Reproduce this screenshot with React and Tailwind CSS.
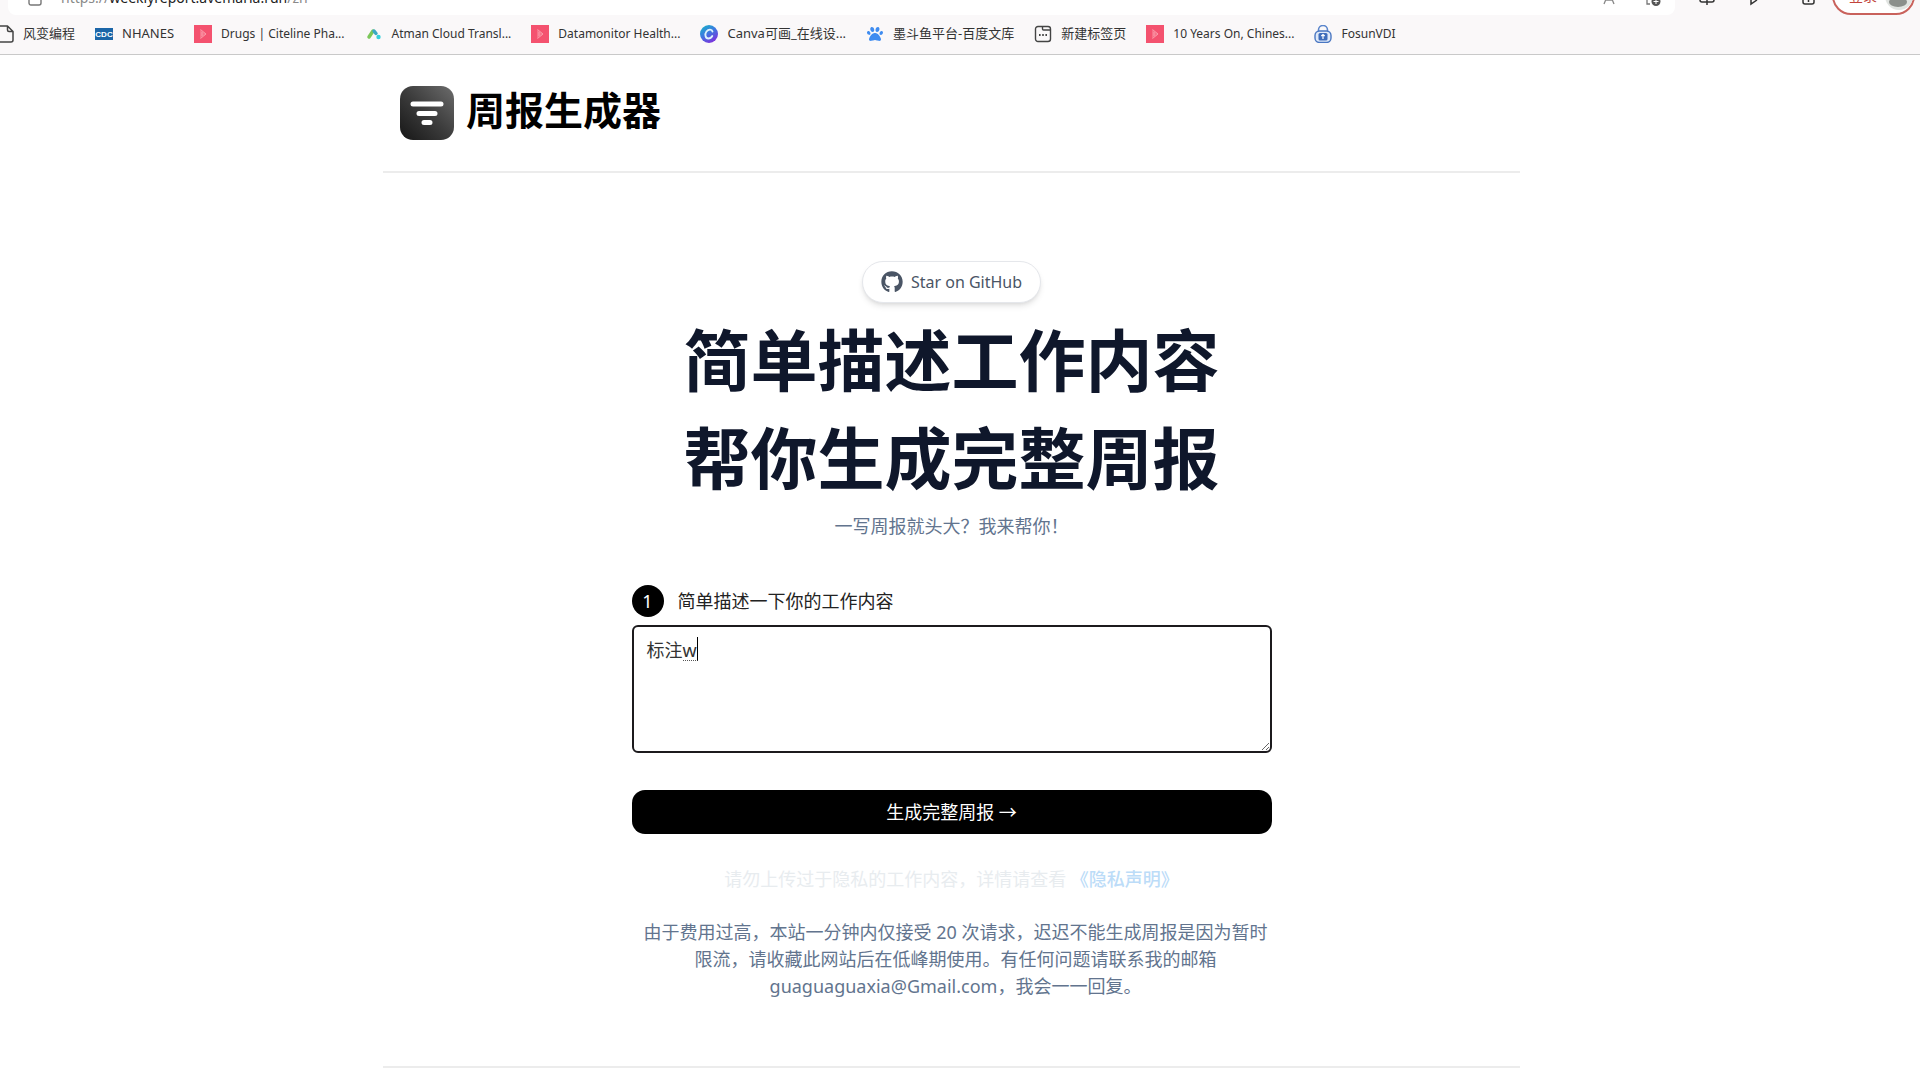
import { useState } from "react";
import { FaGithub } from "react-icons/fa";
import { FaPaw } from "react-icons/fa6";

const PageIcon = () => (
  <svg className="h-[18px] w-[14px]" viewBox="0 0 14 18" fill="none" stroke="#444" strokeWidth="1.5" strokeLinejoin="round">
    <path d="M-1 1h8.5L13 6.500v8.500a2 2 0 0 1-2 2H-1M7.500 1v4a1.500 1.500 0 0 0 1.500 1.500h4" />
  </svg>
);

const CdcIcon = () => (
  <svg className="h-[18px] w-[18px]" viewBox="0 0 18 18">
    <rect y="3" width="18" height="12" fill="#1c66a8" />
    <text x="9" y="12" textAnchor="middle" fontSize="8" fontWeight="bold" fontFamily="Liberation Sans, sans-serif" fill="#fff">
      CDC
    </text>
  </svg>
);

const CitelineIcon = () => (
  <svg className="h-[18px] w-[18px]" viewBox="0 0 18 18">
    <rect width="18" height="18" fill="#f4526f" />
    <path d="M6 4.500L12 9l-6 4.500z" fill="#f77389" />
    <path d="M6.500 4.500L12 9l-5.500 4.500M8 7v4" fill="none" stroke="#fa9dab" strokeWidth="1" />
  </svg>
);

const AtmanIcon = () => (
  <svg className="h-[18px] w-[18px]" viewBox="0 0 18 18" fill="none" strokeWidth="3.500" strokeLinecap="round">
    <path d="M4 12l4-6" stroke="#7cc75a" />
    <path d="M9 6l2 2.500" stroke="#3aa9c4" />
    <circle cx="13.500" cy="12" r="2.200" fill="#35d0dc" />
  </svg>
);

const CanvaIcon = () => (
  <svg className="h-[18px] w-[18px]" viewBox="0 0 18 18">
    <defs>
      <linearGradient id="canva" x1="0" y1="0" x2="0.6" y2="1">
        <stop offset="0" stopColor="#12b9c4" />
        <stop offset="0.5" stopColor="#3b7be0" />
        <stop offset="1" stopColor="#7a35dd" />
      </linearGradient>
    </defs>
    <circle cx="9" cy="9" r="9" fill="url(#canva)" />
    <path d="M12.500 6.500C12 4 8.500 3.800 6.500 6.500s-1.200 7 1.800 7c1.800 0 3.200-1 4-2.500" fill="none" stroke="#dff3fb" strokeWidth="1.800" strokeLinecap="round" />
  </svg>
);

const BaiduIcon = () => <FaPaw className="h-[16px] w-[18px] text-[#3f8cf0]" />;

const NewTabIcon = () => (
  <svg className="h-[18px] w-[18px]" viewBox="0 0 18 18" fill="none" stroke="#444" strokeWidth="1.400">
    <rect x="1.500" y="1.500" width="15" height="15" rx="2.500" />
    <path d="M8.500 1.500V4a1 1 0 0 0 1 1h7" />
    <path d="M5 10h1.600M8.200 10h1.600M11.400 10H13" strokeWidth="1.800" />
  </svg>
);

const VdiIcon = () => (
  <svg className="h-[18px] w-[18px]" viewBox="0 0 18 18" fill="none">
    <path d="M4.500 7.500V5a4.500 4.500 0 0 1 9 0v2.500" stroke="#5b86cc" strokeWidth="1.600" />
    <rect x="1" y="6" width="16" height="11.500" rx="4.500" fill="#dfe9f8" stroke="#4a77c2" strokeWidth="1.400" />
    <rect x="4.500" y="8" width="9" height="7.500" rx="1.500" fill="#3f6dbb" />
    <path d="M9 9.500v4.500M7.300 11L9 9.500l1.700 1.500" stroke="#fff" strokeWidth="1.200" />
  </svg>
);

const bookmarks = [
  { title: "风变编程", icon: PageIcon, size: "text-[13px]" },
  { title: "NHANES", icon: CdcIcon, size: "text-[13px]" },
  { title: "Drugs | Citeline Pha...", icon: CitelineIcon, size: "text-xs" },
  { title: "Atman Cloud Transl...", icon: AtmanIcon, size: "text-xs" },
  { title: "Datamonitor Health...", icon: CitelineIcon, size: "text-xs" },
  { title: "Canva可画_在线设...", icon: CanvaIcon, size: "text-[13px]" },
  { title: "墨斗鱼平台-百度文库", icon: BaiduIcon, size: "text-[13px]" },
  { title: "新建标签页", icon: NewTabIcon, size: "text-[13px]" },
  { title: "10 Years On, Chines...", icon: CitelineIcon, size: "text-xs" },
  { title: "FosunVDI", icon: VdiIcon, size: "text-xs" },
];

const BrowserBar = () => (
  <div className="border-b border-[#c9c9c9] bg-[#faf8f9]">
    {/* the toolbar is scrolled past the top edge, only its lower part shows */}
    <div className="flex h-[15px] items-end overflow-hidden pr-[5px] pl-2">
      <div className="flex h-[34px] flex-1 items-center rounded-lg bg-white pr-[14px] pl-5 text-sm whitespace-pre">
        <svg className="mr-[19px] h-4 w-[14px]" viewBox="0 0 14 16" fill="none" stroke="#777" strokeWidth="1.400">
          <rect x="1" y="5" width="12" height="10" rx="2" />
          <path d="M4 5V3.500a3 3 0 0 1 6 0V5" />
        </svg>
        <span className="text-[#8a8a8a]">https://</span>
        <span className="text-[#222]">weeklyreport.avemaria.run</span>
        <span className="text-[#8a8a8a]">/zh</span>
        <svg className="ml-auto h-4 w-3" viewBox="0 0 12 16" fill="none" stroke="#888" strokeWidth="1.300">
          <path d="M1 14L6 2l5 12M3 10h6" />
        </svg>
        <svg className="ml-[30px] h-[18px] w-4" viewBox="0 0 16 18" fill="none" stroke="#777" strokeWidth="1.300">
          <path d="M5 15H2V4l5-3 5 3v4" />
          <circle cx="11" cy="12.500" r="4.500" fill="#555" stroke="none" />
          <path d="M11 10v5M8.500 12.500h5" stroke="#fff" strokeWidth="1" />
        </svg>
      </div>
      <div className="ml-6 flex h-9 items-center gap-[34px] text-[#333]">
        <svg className="h-[18px] w-4" viewBox="0 0 16 18" fill="none" stroke="currentColor" strokeWidth="1.500">
          <rect x="1" y="2" width="14" height="12" rx="2" />
          <path d="M8 0v17" />
        </svg>
        <svg className="h-[18px] w-4" viewBox="0 0 16 18" fill="none" stroke="currentColor" strokeWidth="1.500">
          <path d="M2 3v13l6-4M9 11h6" />
        </svg>
        <svg className="h-[18px] w-4" viewBox="0 0 16 18" fill="none" stroke="currentColor" strokeWidth="1.500">
          <rect x="4" y="4" width="11" height="12" rx="2" />
          <path d="M9.500 7v7M6 10.500h7M1 11h2" />
        </svg>
      </div>
      <button className="ml-[17px] flex h-[38px] w-[83px] items-center justify-between rounded-full border-2 border-[#c9625c] bg-white pl-[15px] text-sm text-[#c2443c]">
        登录
        <svg className="h-7 w-7" viewBox="0 0 28 28">
          <circle cx="14" cy="14" r="14" fill="#e1e4e1" />
          <ellipse cx="13" cy="20" rx="9" ry="5" fill="#8b8f8b" />
        </svg>
      </button>
    </div>
    <nav className="flex h-[39px] items-center gap-5 overflow-hidden pb-0.5 text-[#333]">
      {bookmarks.map(({ title, icon: Icon, size }) => (
        <a key={title} href="#" className={`flex shrink-0 items-center gap-[9px] whitespace-nowrap ${size}`}>
          <Icon />
          {title}
        </a>
      ))}
    </nav>
  </div>
);

const Logo = () => (
  <svg className="h-[54px] w-[54px]" viewBox="0 0 54 54">
    <defs>
      <linearGradient id="logo" x1="1" y1="0" x2="0" y2="1">
        <stop offset="0" stopColor="#6c6c6c" />
        <stop offset="0.5" stopColor="#3c3c3c" />
        <stop offset="1" stopColor="#161616" />
      </linearGradient>
    </defs>
    <rect width="54" height="54" rx="13" fill="url(#logo)" />
    <path d="M13 18h28M19 27.500h16M24 36.500h6" stroke="#fff" strokeWidth="5" strokeLinecap="round" />
  </svg>
);

export default function App() {
  const [text, setText] = useState("标注w");

  return (
    <div className="min-h-screen bg-white font-['Noto_Sans','Noto_Sans_CJK_SC',sans-serif]">
      <BrowserBar />
      <div className="pr-[17px]">
        <div className="mx-auto max-w-[1137px]">
          <header className="flex items-center gap-3 border-b-2 border-[#ececec] px-[17px] py-[31px]">
            <Logo />
            <h1 className="pb-1.5 text-[39px] leading-[48px] font-bold text-black">周报生成器</h1>
          </header>

          <main className="mx-auto flex max-w-[640px] flex-col items-center pt-[88px] pb-[66px] text-[18px] leading-[27px]">
            <a
              href="#"
              className="flex h-[42px] items-center gap-2 rounded-full border border-gray-200 bg-white px-[18px] text-[16px] text-gray-600 shadow-md"
            >
              <FaGithub size={22} />
              Star on GitHub
            </a>
            <h2 className="mt-2 text-center text-[67px] leading-[98px] font-bold whitespace-nowrap text-slate-900">
              简单描述工作内容
              <br />
              帮你生成完整周报
            </h2>
            <p className="mt-1.5 text-slate-500">一写周报就头大？我来帮你！</p>

            <form className="mt-[45px] w-full" onSubmit={(e) => e.preventDefault()}>
              <div className="flex items-center gap-3.5">
                <span className="flex h-8 w-8 items-center justify-center rounded-full bg-black text-white">1</span>
                <label htmlFor="work" className="text-[#222]">
                  简单描述一下你的工作内容
                </label>
              </div>
              <div className="relative mt-2">
                <textarea
                  id="work"
                  value={text}
                  onChange={(e) => setText(e.target.value)}
                  className="block h-32 w-full rounded-md border-2 border-[#1c1a1d] bg-white px-[13px] py-2.5 text-[#333] outline-none"
                />
                {/* input method composition mark and caret */}
                <span className="pointer-events-none absolute top-3 left-[51px] h-6 w-[15px] border-r border-b border-r-black border-b-[#555] [border-bottom-style:dotted]" />
              </div>
              <button className="mt-[37px] h-11 w-full rounded-[13px] bg-black text-white">生成完整周报 →</button>
            </form>

            <p className="mt-8 text-[#e8ecef]">
              请勿上传过于隐私的工作内容，详情请查看{" "}
              <a href="#" className="font-medium text-[#bcdcf8]">
                《隐私声明》
              </a>
            </p>
            <p className="mt-[26px] pl-2 text-center text-slate-500">
              由于费用过高，本站一分钟内仅接受 20 次请求，迟迟不能生成周报是因为暂时限流，请收藏此网站后在低峰期使用。有任何问题请联系我的邮箱
              guaguaguaxia@Gmail.com，我会一一回复。
            </p>
          </main>
          <hr className="border-t-2 border-[#ececec]" />
        </div>
      </div>
    </div>
  );
}
